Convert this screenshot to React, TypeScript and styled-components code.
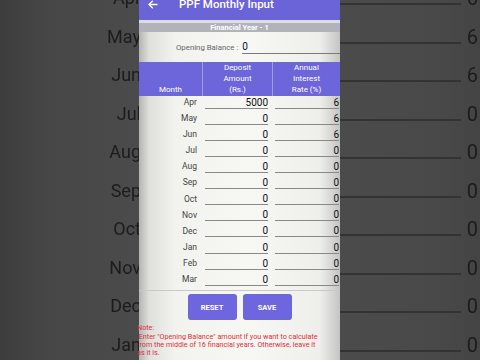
import styled, { createGlobalStyle } from 'styled-components'

const GlobalStyle = createGlobalStyle`
  html, body {
    margin: 0;
    padding: 0;
    background: #484848;
  }
  body {
    font-family: Roboto, 'Liberation Sans', Arial, sans-serif;
  }
`

const months = ['Apr', 'May', 'Jun', 'Jul', 'Aug', 'Sep', 'Oct', 'Nov', 'Dec', 'Jan', 'Feb', 'Mar']
const deposits = ['5000', '0', '0', '0', '0', '0', '0', '0', '0', '0', '0', '0']
const rates = ['6', '6', '6', '0', '0', '0', '0', '0', '0', '0', '0', '0']

const noteText =
  'Note:\n Enter "Opening Balance" amount if you want to calculate\nfrom the middle of 16 financial years. Otherwise, leave it\nas it is.'

export default function App() {
  return (
    <>
      <GlobalStyle />
      <Stage>
        {/* zoomed, blurred copy of the screen behind the phone frame */}
        <SideLeft>
          <SideList>
            {months.map((m) => (
              <SideMonth key={m}>{m}</SideMonth>
            ))}
          </SideList>
        </SideLeft>

        <Screen>
          <TitleBar>
            <BackArrow width="10" height="9" viewBox="0 0 10 9">
              <path d="M9.5 4.5H1.2M4.8 0.8L1 4.5l3.8 3.7" stroke="#fff" strokeWidth="1.3" fill="none" />
            </BackArrow>
            <Title>PPF Monthly Input</Title>
          </TitleBar>
          <Divider />
          <YearBand>Financial Year - 1</YearBand>

          <OpeningRow>
            <OpeningLabel>Opening Balance :</OpeningLabel>
            <OpeningInput>0</OpeningInput>
          </OpeningRow>

          <HeaderRow>
            <HeadCell>Month</HeadCell>
            <HeadCell>
              Deposit
              <br />
              Amount
              <br />
              (Rs.)
            </HeadCell>
            <HeadCell>
              Annual
              <br />
              Interest
              <br />
              Rate (%)
            </HeadCell>
          </HeaderRow>

          <TableBody>
            {months.map((m, i) => (
              <Row key={m}>
                <MonthLabel>{m}</MonthLabel>
                <ValueInput $right={4}>{deposits[i]}</ValueInput>
                <ValueInput $right={1}>{rates[i]}</ValueInput>
              </Row>
            ))}
          </TableBody>

          <ButtonRow>
            <ActionButton>RESET</ActionButton>
            <ActionButton>SAVE</ActionButton>
          </ButtonRow>

          <Note>{noteText}</Note>
        </Screen>

        <SideRight>
          <SideValues>
            {rates.map((r, i) => (
              <SideValueRow key={i}>
                <SideRule />
                <SideDigit>{r}</SideDigit>
              </SideValueRow>
            ))}
          </SideValues>
        </SideRight>
      </Stage>
    </>
  )
}

const Stage = styled.div`
  width: 480px;
  height: 360px;
  overflow: hidden;
  display: flex;
  background: #484848;
`

const SideLeft = styled.div`
  width: 139px;
  flex-shrink: 0;
  overflow: hidden;
  background: linear-gradient(90deg, #3d3d3d 0%, #474747 35%, #4b4b4b 100%);
`

const SideList = styled.div`
  margin-top: -21px;
  margin-right: -2px;
  filter: blur(0.7px);
`

const SideMonth = styled.div`
  height: 38.5px;
  line-height: 38.5px;
  text-align: right;
  font-size: 18px;
  color: #1c1c1c;
`

const SideRight = styled.div`
  flex: 1;
  overflow: hidden;
  background: linear-gradient(90deg, #4b4b4b 0%, #494949 70%, #444 100%);
`

const SideValues = styled.div`
  margin-top: -33.5px;
  padding-right: 2px;
  filter: blur(0.7px);
`

const SideValueRow = styled.div`
  height: 38.5px;
  display: flex;
  align-items: flex-end;
`

const SideRule = styled.div`
  flex: 1;
  height: 2px;
  background: #333;
  margin-right: 6px;
`

const SideDigit = styled.div`
  font-size: 20px;
  line-height: 20px;
  margin-bottom: -3px;
  color: #1c1c1c;
`

const Screen = styled.div`
  width: 201px;
  flex-shrink: 0;
  display: flex;
  flex-direction: column;
  background: linear-gradient(90deg, #b4b4b2 0%, #dfdfdc 5%, #f2f2ee 18%, #f7f7f3 55%, #eeeeeb 90%, #c4c4c2 100%);
`

const TitleBar = styled.div`
  height: 20px;
  flex-shrink: 0;
  display: flex;
  align-items: flex-start;
  padding-left: 9px;
  background: #6b63d8;
  color: #fff;
`

const BackArrow = styled.svg`
  margin-top: 0;
  flex-shrink: 0;
`

const Title = styled.div`
  margin-left: 21px;
  margin-top: -2px;
  font-size: 11.5px;
  line-height: 12px;
  font-weight: 500;
  white-space: nowrap;
`

const Divider = styled.div`
  height: 3px;
  background: #dcdce6;
`

const YearBand = styled.div`
  height: 9px;
  line-height: 9px;
  background: #b2b2bc;
  color: #fff;
  font-size: 7.5px;
  font-weight: 700;
  text-align: center;
`

const OpeningRow = styled.div`
  height: 30px;
  display: flex;
  align-items: center;
`

const OpeningLabel = styled.div`
  margin-left: 37px;
  font-size: 7.8px;
  color: #666;
  white-space: nowrap;
`

const OpeningInput = styled.div`
  flex: 1;
  margin-left: 4px;
  margin-top: 1px;
  height: 12px;
  line-height: 12px;
  font-size: 10px;
  color: #111;
  border-bottom: 1px solid #7a7a7a;
`

const HeaderRow = styled.div`
  height: 34px;
  display: grid;
  grid-template-columns: 63px 70px 68px;
  background: #6d66da;
`

const HeadCell = styled.div`
  display: flex;
  align-items: flex-end;
  justify-content: center;
  padding-bottom: 1px;
  text-align: center;
  font-size: 8px;
  line-height: 11px;
  color: #fff;
  & + & {
    border-left: 1px solid rgba(255, 255, 255, 0.35);
  }
`

const TableBody = styled.div`
  padding-top: 1px;
  border-bottom: 1px solid #c9c9c9;
`

const Row = styled.div`
  height: 16.1px;
  display: grid;
  grid-template-columns: 63px 70px 68px;
  align-items: start;
`

const MonthLabel = styled.div`
  height: 10.7px;
  line-height: 10.7px;
  padding-right: 5px;
  text-align: right;
  font-size: 8.5px;
  color: #444;
`

const ValueInput = styled.div<{ $right: number }>`
  height: 11.7px;
  box-sizing: border-box;
  margin-left: 3px;
  margin-right: ${(p) => p.$right}px;
  display: flex;
  align-items: flex-end;
  justify-content: flex-end;
  font-size: 10px;
  line-height: 10px;
  color: #111;
  border-bottom: 1px solid #888;
`

const ButtonRow = styled.div`
  display: flex;
  justify-content: center;
  gap: 6px;
  padding-top: 3px;
`

const ActionButton = styled.button`
  width: 49px;
  height: 26px;
  padding: 0;
  border: none;
  border-radius: 3px;
  background: #6e66de;
  color: #fff;
  font-family: Roboto, 'Liberation Sans', Arial, sans-serif;
  font-size: 7.5px;
  font-weight: 700;
`

const Note = styled.div`
  margin-top: 4px;
  margin-left: -2px;
  white-space: pre;
  font-size: 7.2px;
  line-height: 8.4px;
  color: #df2f3c;
`
